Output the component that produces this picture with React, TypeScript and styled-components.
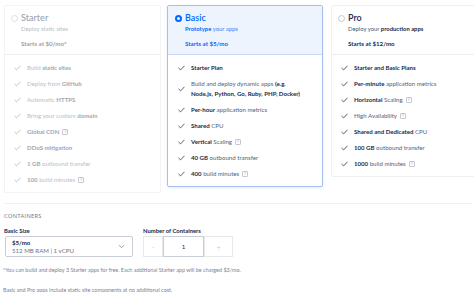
import React from "react";
import styled, { createGlobalStyle, css } from "styled-components";

const Global = createGlobalStyle`
  html, body { margin: 0; padding: 0; background: #ffffff; }
  body { font-family: Lato, "Open Sans", "Liberation Sans", sans-serif; overflow: hidden; }
  * { box-sizing: border-box; }
`;

type Variant = "starter" | "basic" | "pro";

const Page = styled.div`
  width: 474px;
  height: 292px;
  overflow: hidden;
  background: #fff;
`;

const Content = styled.div`
  width: 520px;
  padding: 5px 0 0 4px;
`;

const CardsRow = styled.div`
  display: flex;
  align-items: flex-start;
  gap: 6px;
`;

const Card = styled.div<{ $v: Variant }>`
  width: 157px;
  flex: none;
  border: 1px solid #eef0f3;
  border-radius: 2px;
  background: #fff;
  ${(p) =>
    p.$v === "basic" &&
    css`
      width: 156px;
      border-color: #a8c0f0;
      box-shadow: 0 1px 3px rgba(40, 80, 160, 0.12);
      margin-right: 2px;
    `}
  ${(p) =>
    p.$v === "starter" &&
    css`
      border-color: #f2f3f5;
    `}
`;

const Header = styled.div<{ $v: Variant }>`
  padding: 6px 6px 6px 6px;
  border-bottom: 1px solid #eceef2;
  background: ${(p) => (p.$v === "basic" ? "#eef4fe" : "#fff")};
  ${(p) => p.$v === "basic" && css`padding-left: 7px; border-bottom-color: #c9d8f5;`}
`;

const TitleRow = styled.div`
  display: flex;
  align-items: center;
  gap: 3px;
  height: 12px;
`;

const Radio = styled.span<{ $v: Variant }>`
  width: 7px;
  height: 7px;
  border-radius: 50%;
  flex: none;
  border: 1px solid #c3c7cf;
  ${(p) => p.$v === "starter" && css`border-color: #dcdfe4;`}
  ${(p) => p.$v === "basic" && css`border: 2px solid #0069ff;`}
`;

const Title = styled.span<{ $v: Variant }>`
  font-size: 9px;
  font-weight: 600;
  line-height: 12px;
  color: ${(p) => (p.$v === "basic" ? "#0069ff" : p.$v === "starter" ? "#a3a9b5" : "#1b2a4a")};
`;

const Sub = styled.div<{ $v: Variant }>`
  margin: 1px 0 0 10px;
  font-size: 5.9px;
  line-height: 8px;
  color: ${(p) => (p.$v === "basic" ? "#3b82f6" : p.$v === "starter" ? "#b8bdc7" : "#4a5670")};
  b { font-weight: 700; color: ${(p) => (p.$v === "basic" ? "#0069ff" : p.$v === "starter" ? "#aab0bb" : "#1b2a4a")}; }
`;

const Price = styled.div<{ $v: Variant }>`
  margin: 7px 0 0 10px;
  font-size: 6.2px;
  font-weight: 700;
  line-height: 8px;
  color: ${(p) => (p.$v === "basic" ? "#0069ff" : p.$v === "starter" ? "#9aa1ad" : "#1b2a4a")};
`;

const List = styled.ul`
  list-style: none;
  margin: 0;
  padding: 5px 0 4px 0;
`;

const Row = styled.li<{ $v: Variant }>`
  display: flex;
  align-items: center;
  gap: 6px;
  padding: 3px 3px 3px 9px;
  font-size: 6.1px;
  line-height: 10px;
  color: ${(p) => (p.$v === "starter" ? "#b9bec8" : "#55617a")};
  b {
    font-weight: 700;
    color: ${(p) => (p.$v === "starter" ? "#a0a7b3" : "#1b2a4a")};
  }
  ${(p) => p.$v === "basic" && css`padding-left: 10px;`}
`;

const Check = styled.svg<{ $v: Variant }>`
  width: 7px;
  height: 6px;
  flex: none;
  stroke: ${(p) => (p.$v === "starter" ? "#b9bec8" : "#3d4c6e")};
`;

const Help = styled.span`
  display: inline-flex;
  align-items: center;
  justify-content: center;
  width: 6px;
  height: 6px;
  margin-left: 3px;
  border: 0.8px solid #c3c8d2;
  border-radius: 1px;
  font-size: 4.3px;
  line-height: 1;
  color: #9aa1ae;
  vertical-align: middle;
`;

const Bottom = styled.div`
  width: 468px;
  margin-top: 10px;
  border-top: 1px solid #eef0f3;
`;

const SectionLabel = styled.div`
  margin-top: 8px;
  font-size: 5.5px;
  line-height: 8px;
  letter-spacing: 0.35px;
  color: #6f7889;
`;

const FormRow = styled.div`
  display: flex;
  gap: 10px;
  margin-top: 7px;
`;

const Field = styled.div`
  display: flex;
  flex-direction: column;
  gap: 1px;
`;

const Label = styled.div`
  font-size: 5.9px;
  font-weight: 700;
  line-height: 8px;
  color: #1b2a4a;
`;

const Select = styled.div`
  width: 128px;
  height: 21px;
  border: 1px solid #c9ced6;
  border-radius: 2px;
  display: flex;
  align-items: center;
  justify-content: space-between;
  padding: 0 7px 0 6px;
  margin-left: 1px;
`;

const SelectText = styled.div`
  display: flex;
  flex-direction: column;
  font-size: 6.1px;
  line-height: 8px;
  color: #6b7487;
  b { color: #1b2a4a; font-weight: 700; }
`;

const Stepper = styled.div`
  display: flex;
  height: 21px;
`;

const StepBtn = styled.div<{ $w: number }>`
  width: ${(p) => p.$w}px;
  border: 1px solid #e6e8ec;
  display: flex;
  align-items: center;
  justify-content: center;
  color: #c3c8d1;
  font-size: 8px;
  font-weight: 300;
`;

const StepValue = styled.div`
  width: 41px;
  border: 1px solid #c9ced6;
  display: flex;
  align-items: center;
  justify-content: center;
  font-size: 6.2px;
  color: #1b2a4a;
`;

const Note = styled.div<{ $mt: number }>`
  margin-top: ${(p) => p.$mt}px;
  margin-left: -1px;
  font-size: 5.45px;
  line-height: 8px;
  color: #7a8396;
`;

type Seg = [string, boolean] | "br";
type Feature = { segs: Seg[]; help?: boolean };

const features: Record<Variant, Feature[]> = {
  starter: [
    { segs: [["Build ", false], ["static sites", true]] },
    { segs: [["Deploy from ", false], ["GitHub", true]] },
    { segs: [["Automatic ", false], ["HTTPS", true]] },
    { segs: [["Bring your custom ", false], ["domain", true]] },
    { segs: [["Global CDN", true]], help: true },
    { segs: [["DDoS mitigation", true]] },
    { segs: [["1 GB", true], [" outbound transfer", false]] },
    { segs: [["100", true], [" build minutes", false]], help: true },
  ],
  basic: [
    { segs: [["Starter Plan", true]] },
    {
      segs: [
        ["Build and deploy dynamic apps ", false],
        ["(e.g.", true],
        "br",
        ["Node.js, Python, Go, Ruby, PHP, Docker)", true],
      ],
    },
    { segs: [["Per-hour", true], [" application metrics", false]] },
    { segs: [["Shared", true], [" CPU", false]] },
    { segs: [["Vertical", true], [" Scaling", false]], help: true },
    { segs: [["40 GB", true], [" outbound transfer", false]] },
    { segs: [["400", true], [" build minutes", false]], help: true },
  ],
  pro: [
    { segs: [["Starter and Basic Plans", true]] },
    { segs: [["Per-minute", true], [" application metrics", false]] },
    { segs: [["Horizontal", true], [" Scaling", false]], help: true },
    { segs: [["High Availability", false]], help: true },
    { segs: [["Shared and Dedicated", true], [" CPU", false]] },
    { segs: [["100 GB", true], [" outbound transfer", false]] },
    { segs: [["1000", true], [" build minutes", false]], help: true },
  ],
};

const plans: { v: Variant; title: string; sub: React.ReactNode; price: string }[] = [
  { v: "starter", title: "Starter", sub: "Deploy static sites", price: "Starts at $0/mo*" },
  { v: "basic", title: "Basic", sub: <><b>Prototype</b> your apps</>, price: "Starts at $5/mo" },
  { v: "pro", title: "Pro", sub: <>Deploy your <b>production apps</b></>, price: "Starts at $12/mo" },
];

function CheckIcon({ v }: { v: Variant }) {
  return (
    <Check $v={v} viewBox="0 0 7 6" fill="none" strokeWidth="0.9" strokeLinecap="round" strokeLinejoin="round">
      <path d="M0.8 3.2 L2.6 4.9 L6.2 1.1" />
    </Check>
  );
}

function PlanCard({ v, title, sub, price }: { v: Variant; title: string; sub: React.ReactNode; price: string }) {
  return (
    <Card $v={v}>
      <Header $v={v}>
        <TitleRow>
          <Radio $v={v} />
          <Title $v={v}>{title}</Title>
        </TitleRow>
        <Sub $v={v}>{sub}</Sub>
        <Price $v={v}>{price}</Price>
      </Header>
      <List>
        {features[v].map((f, i) => (
          <Row key={i} $v={v}>
            <CheckIcon v={v} />
            <span>
              {f.segs.map((s, j) =>
                s === "br" ? <br key={j} /> : s[1] ? <b key={j}>{s[0]}</b> : <React.Fragment key={j}>{s[0]}</React.Fragment>
              )}
              {f.help && <Help>?</Help>}
            </span>
          </Row>
        ))}
      </List>
    </Card>
  );
}

export default function App() {
  return (
    <Page>
      <Global />
      <Content>
        <CardsRow>
          {plans.map((p) => (
            <PlanCard key={p.v} {...p} />
          ))}
        </CardsRow>
        <Bottom>
          <SectionLabel>CONTAINERS</SectionLabel>
          <FormRow>
            <Field>
              <Label>Basic Size</Label>
              <Select>
                <SelectText>
                  <b>$5/mo</b>
                  <span>512 MB RAM | 1 vCPU</span>
                </SelectText>
                <svg width="7" height="5" viewBox="0 0 7 5" fill="none" stroke="#8a92a3" strokeWidth="0.9">
                  <path d="M1 1.2 L3.5 3.7 L6 1.2" />
                </svg>
              </Select>
            </Field>
            <Field>
              <Label>Number of Containers</Label>
              <Stepper>
                <StepBtn $w={20}>−</StepBtn>
                <StepValue>1</StepValue>
                <StepBtn $w={29}>+</StepBtn>
              </Stepper>
            </Field>
          </FormRow>
          <Note $mt={9}>
            *You can build and deploy 3 Starter apps for free. Each additional Starter app will be charged $3/mo.
          </Note>
          <Note $mt={12}>Basic and Pro apps include static site components at no additional cost.</Note>
        </Bottom>
      </Content>
    </Page>
  );
}
